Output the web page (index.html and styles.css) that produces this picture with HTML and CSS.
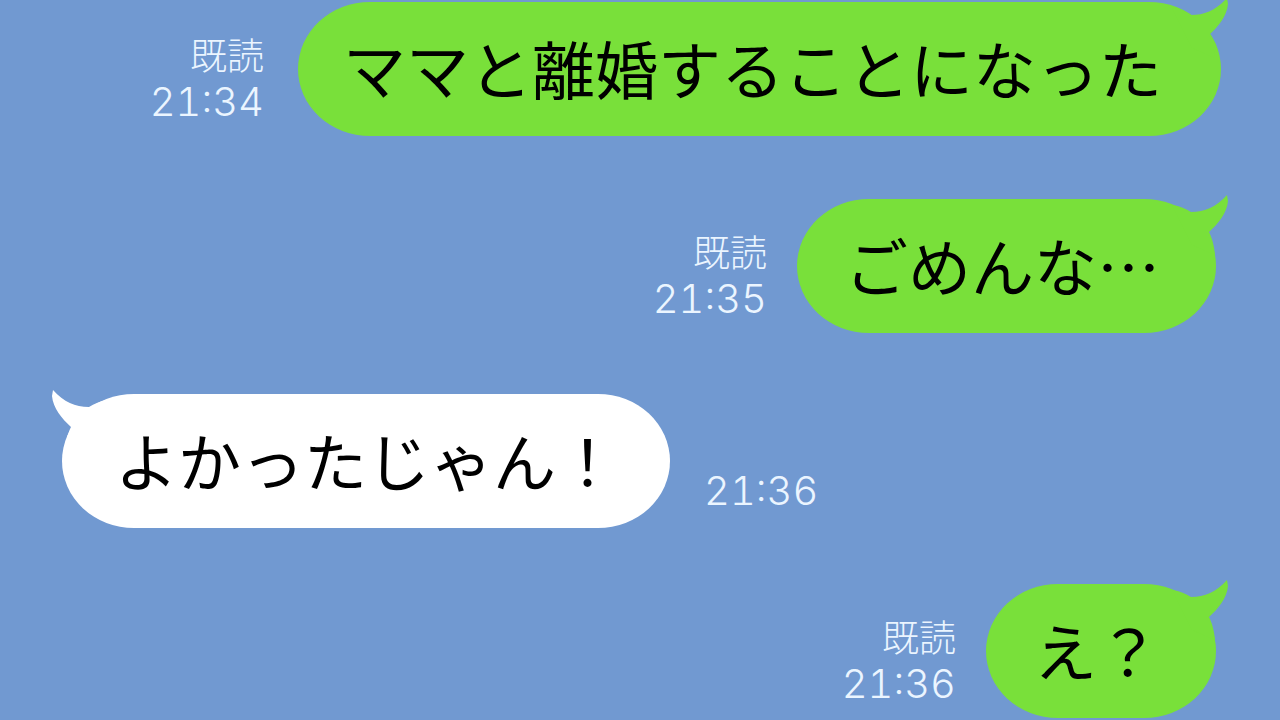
FILE: index.html
```html
<!DOCTYPE html>
<html lang="ja">

<head>
    <meta charset="utf-8">
    <title>トーク</title>
    <link rel="stylesheet" href="styles.css">
</head>

<body>
    <main class="chat">
        <div class="message outgoing">
            <div class="meta">
                <span class="read">既読</span>
                <time>21:34</time>
            </div>
            <div class="bubble long">
                <span class="text">ママと離婚することになった</span>
                <svg class="tail" viewBox="0 0 56 60" aria-hidden="true">
                    <path d="M0 10 C8 11 14 14 19 17 C33 17 44 12 55 0 L56 6 C55 18 46 29 37 37 C40 43 42 50 43 60 L20 50 Z" />
                </svg>
            </div>
        </div>
        <div class="message outgoing">
            <div class="meta">
                <span class="read">既読</span>
                <time>21:35</time>
            </div>
            <div class="bubble">
                <span class="text">ごめんな…</span>
                <svg class="tail" viewBox="0 0 56 60" aria-hidden="true">
                    <path d="M0 10 C8 11 14 14 19 17 C33 17 44 12 55 0 L56 6 C55 18 46 29 37 37 C40 43 42 50 43 60 L20 50 Z" />
                </svg>
            </div>
        </div>
        <div class="message incoming">
            <div class="bubble">
                <span class="text">よかったじゃん！</span>
                <svg class="tail" viewBox="0 0 56 60" aria-hidden="true">
                    <path d="M0 10 C8 11 14 14 19 17 C33 17 44 12 55 0 L56 6 C55 18 46 29 37 37 C40 43 42 50 43 60 L20 50 Z" />
                </svg>
            </div>
            <div class="meta">
                <time>21:36</time>
            </div>
        </div>
        <div class="message outgoing">
            <div class="meta">
                <span class="read">既読</span>
                <time>21:36</time>
            </div>
            <div class="bubble">
                <span class="text">え？</span>
                <svg class="tail" viewBox="0 0 56 60" aria-hidden="true">
                    <path d="M0 10 C8 11 14 14 19 17 C33 17 44 12 55 0 L56 6 C55 18 46 29 37 37 C40 43 42 50 43 60 L20 50 Z" />
                </svg>
            </div>
        </div>
    </main>
</body>

</html>
```
FILE: styles.css
```css
body {
    font-family: "Noto Sans CJK JP", sans-serif;
    background: #7199d1;
    margin: 0;
    padding: 0;
}

.chat {
    padding: 2px 64px 0 62px;
}

.message {
    display: flex;
    align-items: flex-end;
}

.outgoing {
    justify-content: flex-end;
    gap: 30px;
}

.outgoing + .outgoing {
    margin-top: 63px;
}

.incoming {
    gap: 34px;
    margin: 61px 0 56px;
}

.bubble {
    position: relative;
    padding: 0 56px 4px 48px;
    border-radius: 72px / 67px;
    background: #79e03a;
    color: #000;
    font-size: 63px;
    line-height: 130px;
    white-space: nowrap;
}

.incoming .bubble {
    padding: 0 51px 4px 53px;
    background: #fff;
}

/* full-width bubbles sit a little closer to the edge */
.long {
    padding: 0 59px 4px 45px;
    margin: 0 -5px 0 4px;
}

.tail {
    position: absolute;
    top: -4px;
    right: -12px;
    width: 56px;
    height: 60px;
    fill: #79e03a;
}

.long .tail {
    right: -7px;
}

.incoming .tail {
    right: auto;
    left: -10px;
    fill: #fff;
    transform: scaleX(-1);
}

.meta {
    display: flex;
    flex-direction: column;
    align-items: flex-end;
    padding-bottom: 10px;
    color: #ebf5ff;
    font-size: 37px;
    font-weight: 300;
    line-height: 48px;
}

.incoming .meta {
    padding-bottom: 13px;
}

.meta time {
    font-family: Inter, "Noto Sans CJK JP", sans-serif;
    font-size: 40px;
    font-variant-numeric: tabular-nums;
}
```
